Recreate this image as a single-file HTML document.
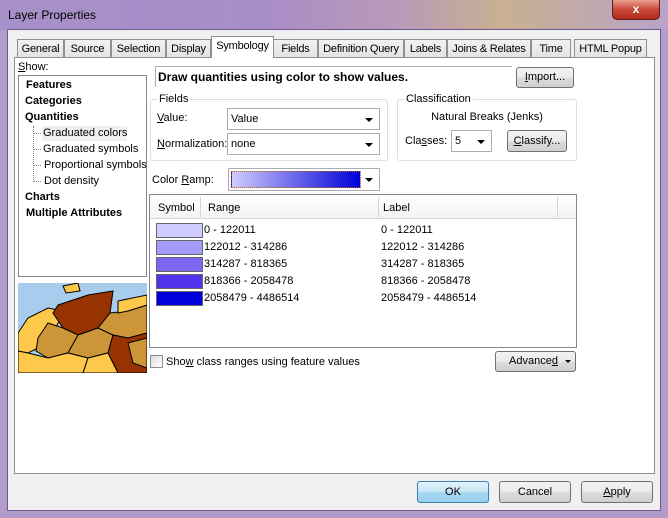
<!DOCTYPE html><html><head><style>
*{box-sizing:border-box}
body{margin:0;width:668px;height:518px;overflow:hidden;font-family:"Liberation Sans",sans-serif;font-size:11px;color:#000;position:relative;background:#b39ccc;white-space:nowrap}
.a{position:absolute}
.btn{position:absolute;border:1px solid #707070;border-radius:3px;background:linear-gradient(#f2f2f2,#ebebeb 50%,#dddddd 51%,#cfcfcf);text-align:center;font-size:11px}
.cb{position:absolute;background:#fff;border:1px solid #abadb3;font-size:11px;padding:4px 0 0 3px}
.cb:after{content:"";position:absolute;right:6px;top:9px;border-left:4px solid transparent;border-right:4px solid transparent;border-top:4px solid #000}
.tab{position:absolute;top:39px;height:18px;border:1px solid #8e8f8f;border-bottom:none;background:linear-gradient(#f2f2f2,#e3e3e3);font-size:11px;text-align:center;padding-top:3px;letter-spacing:-0.2px}
.grp{position:absolute;border:1px solid #d5dfe5;border-radius:3px}
.gl{position:absolute;top:-7px;left:6px;background:#fff;padding:0 2px;font-size:11px;color:#000}
.it{position:absolute;font-size:11px}
</style></head><body>
<div class="a" style="left:0;top:0;width:668px;height:30px;background:linear-gradient(90deg,#a790c8,#a98dc7 40%,#b99ab8 60%,#c8b090 75%,#b9a3c8)"></div>
<div class="a" style="left:8px;top:8px;font-size:12px">Layer Properties</div>
<div class="a" style="left:612px;top:0;width:48px;height:20px;border:1px solid #5a2020;border-top:none;border-radius:0 0 5px 5px;background:linear-gradient(#e8a090,#c8483a 50%,#b02a1a);color:#fff;font-weight:bold;text-align:center;font-size:12px;line-height:18px">x</div>
<div class="a" style="left:7px;top:29px;width:654px;height:482px;background:#f0f0f0;border:1px solid #6e5a90"></div>
<div class="tab" style="left:17px;width:47px">General</div>
<div class="tab" style="left:64px;width:47px">Source</div>
<div class="tab" style="left:111px;width:55px">Selection</div>
<div class="tab" style="left:166px;width:45px">Display</div>
<div class="tab" style="left:273px;width:45px">Fields</div>
<div class="tab" style="left:318px;width:86px">Definition Query</div>
<div class="tab" style="left:404px;width:43px">Labels</div>
<div class="tab" style="left:447px;width:84px">Joins &amp; Relates</div>
<div class="tab" style="left:531px;width:40px">Time</div>
<div class="tab" style="left:574px;width:73px">HTML Popup</div>
<div class="a" style="left:14px;top:57px;width:641px;height:417px;background:#fff;border:1px solid #8e8f8f"></div>
<div class="tab" style="left:211px;top:36px;height:22px;width:63px;background:#fff;z-index:2">Symbology</div>
<div class="a" style="left:18px;top:61px;font-size:11px"><u>S</u>how:</div>
<div class="a" style="left:18px;top:75px;width:129px;height:202px;border:1px solid #828790">
<div class="it" style="left:7px;top:3px;font-weight:bold">Features</div>
<div class="it" style="left:6px;top:19px;font-weight:bold">Categories</div>
<div class="it" style="left:6px;top:35px;font-weight:bold">Quantities</div>
<div class="a" style="left:14px;top:50px;width:1px;height:56px;border-left:1px dotted #888"></div>
<div class="a" style="left:14px;top:57px;width:8px;border-top:1px dotted #888"></div>
<div class="a" style="left:14px;top:73px;width:8px;border-top:1px dotted #888"></div>
<div class="a" style="left:14px;top:89px;width:8px;border-top:1px dotted #888"></div>
<div class="a" style="left:14px;top:105px;width:8px;border-top:1px dotted #888"></div>
<div class="a" style="left:23px;top:50px;width:85px;height:15px;background:#f0f0f0"></div>
<div class="it" style="left:24px;top:51px">Graduated colors</div>
<div class="it" style="left:24px;top:67px">Graduated symbols</div>
<div class="it" style="left:25px;top:83px">Proportional symbols</div>
<div class="it" style="left:25px;top:99px">Dot density</div>
<div class="it" style="left:6px;top:115px;font-weight:bold">Charts</div>
<div class="it" style="left:7px;top:131px;font-weight:bold">Multiple Attributes</div>
</div>
<svg class="a" style="left:18px;top:283px" width="129" height="90" viewBox="0 0 129 90">
<rect width="129" height="90" fill="#a8ccee"/>
<g stroke="#000" stroke-width="1">
<path d="M0 50 L10 35 L30 25 L45 28 L60 22 L40 40 L30 60 L10 70 L0 68Z" fill="#fdc94a"/>
<path d="M40 22 L70 12 L95 8 L92 30 L80 45 L60 52 L45 45 L35 30Z" fill="#963300"/>
<path d="M30 40 L45 45 L60 52 L50 70 L30 75 L18 68 L20 55Z" fill="#cc9538"/>
<path d="M60 52 L80 45 L95 52 L90 70 L70 75 L50 70Z" fill="#cc9538"/>
<path d="M92 30 L110 28 L129 22 L129 50 L110 55 L95 52 L80 45Z" fill="#cc9538"/>
<path d="M100 18 L129 12 L129 22 L110 28 L100 30Z" fill="#fdc94a"/>
<path d="M95 52 L110 55 L129 50 L129 90 L100 90 L90 70Z" fill="#963300"/>
<path d="M10 70 L30 75 L50 70 L70 75 L65 90 L0 90 L0 68Z" fill="#fdc94a"/>
<path d="M70 75 L90 70 L100 90 L65 90Z" fill="#fdc94a"/>
<path d="M110 60 L129 55 L129 85 L115 80Z" fill="#cc9538"/>
<path d="M45 3 L60 0 L62 8 L48 10Z" fill="#fdc94a"/>
</g></svg>
<div class="a" style="left:155px;top:66px;width:357px;height:21px;border-top:1px solid #abadb3;border-left:1px solid #abadb3;font-weight:bold;font-size:12px;padding:3px 0 0 2px">Draw quantities using color to show values.</div>
<div class="btn" style="left:516px;top:67px;width:58px;height:21px;line-height:19px"><u>I</u>mport...</div>
<div class="grp" style="left:150px;top:99px;width:238px;height:62px"><span class="gl">Fields</span></div>
<div class="a" style="left:157px;top:112px"><u>V</u>alue:</div>
<div class="cb" style="left:227px;top:108px;width:153px;height:22px">Value</div>
<div class="a" style="left:157px;top:138px"><u>N</u>ormalization:</div>
<div class="cb" style="left:227px;top:133px;width:153px;height:22px">none</div>
<div class="grp" style="left:397px;top:99px;width:180px;height:62px"><span class="gl">Classification</span></div>
<div class="a" style="left:397px;top:111px;width:180px;text-align:center">Natural Breaks (Jenks)</div>
<div class="a" style="left:405px;top:135px">Cla<u>s</u>ses:</div>
<div class="cb" style="left:451px;top:130px;width:41px;height:22px">5</div>
<div class="btn" style="left:507px;top:130px;width:60px;height:22px;line-height:20px"><u>C</u>lassify...</div>
<div class="a" style="left:152px;top:174px">Color <u>R</u>amp:</div>
<div class="cb" style="left:228px;top:168px;width:152px;height:23px;padding:2px"><div style="width:130px;height:17px;border:1px dotted #c06000;background:linear-gradient(90deg,#d0ccff,#0000d8)"></div></div>
<div class="a" style="left:149px;top:194px;width:428px;height:154px;border:1px solid #828790;overflow:hidden">
<div class="a" style="left:0;top:0;width:428px;height:24px;background:linear-gradient(#fff,#f3f3f3);border-bottom:1px solid #d5d5d5"></div>
<div class="a" style="left:50px;top:2px;height:20px;border-left:1px solid #d5d5d5"></div>
<div class="a" style="left:228px;top:2px;height:20px;border-left:1px solid #d5d5d5"></div>
<div class="a" style="left:407px;top:2px;height:20px;border-left:1px solid #d5d5d5"></div>
<div class="it" style="left:8px;top:7px">Symbol</div>
<div class="it" style="left:58px;top:7px">Range</div>
<div class="it" style="left:233px;top:7px">Label</div>
<div class="a" style="left:6px;top:28px;width:47px;height:15px;background:#cfccff;border:1px solid #666"></div>
<div class="a" style="left:6px;top:45px;width:47px;height:15px;background:#a49cf7;border:1px solid #666"></div>
<div class="a" style="left:6px;top:62px;width:47px;height:15px;background:#7c66f2;border:1px solid #666"></div>
<div class="a" style="left:6px;top:79px;width:47px;height:15px;background:#5033ea;border:1px solid #666"></div>
<div class="a" style="left:6px;top:96px;width:47px;height:15px;background:#0000df;border:1px solid #666"></div>
<div class="it" style="left:54px;top:29px">0 - 122011</div><div class="it" style="left:231px;top:29px">0 - 122011</div>
<div class="it" style="left:54px;top:46px">122012 - 314286</div><div class="it" style="left:231px;top:46px">122012 - 314286</div>
<div class="it" style="left:54px;top:63px">314287 - 818365</div><div class="it" style="left:231px;top:63px">314287 - 818365</div>
<div class="it" style="left:54px;top:80px">818366 - 2058478</div><div class="it" style="left:231px;top:80px">818366 - 2058478</div>
<div class="it" style="left:54px;top:97px">2058479 - 4486514</div><div class="it" style="left:231px;top:97px">2058479 - 4486514</div>
</div>
<div class="a" style="left:150px;top:355px;width:13px;height:13px;border:1px solid #8f8f8f;background:linear-gradient(135deg,#dcdcdc,#fff)"></div>
<div class="a" style="left:166px;top:356px">Sho<u>w</u> class ranges using feature values</div>
<div class="btn" style="left:495px;top:351px;width:81px;height:21px;line-height:19px;text-align:left;padding-left:13px">Advance<u>d</u> <span style="position:absolute;right:4px;top:8px;border-left:3px solid transparent;border-right:3px solid transparent;border-top:3px solid #000"></span></div>
<div class="btn" style="left:417px;top:481px;width:72px;height:22px;line-height:20px;border-color:#3c7fb1;background:linear-gradient(#e5f4fc,#c4e5f6 50%,#a8d8f2 51%,#98d0ee)">OK</div>
<div class="btn" style="left:499px;top:481px;width:72px;height:22px;line-height:20px">Cancel</div>
<div class="btn" style="left:581px;top:481px;width:72px;height:22px;line-height:20px"><u>A</u>pply</div>
</body></html>
